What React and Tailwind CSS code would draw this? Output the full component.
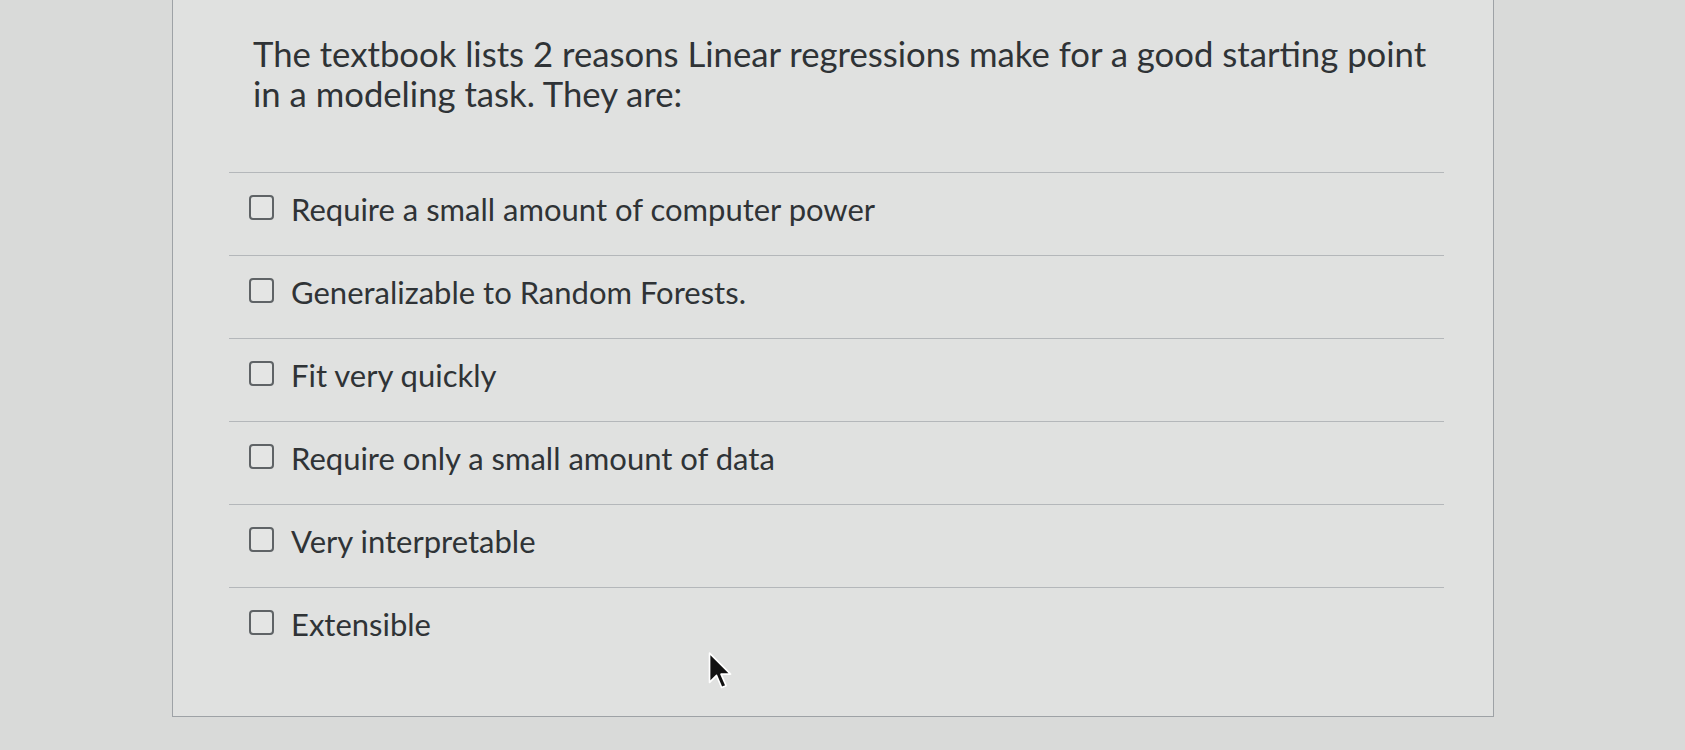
import React from "react";

const options = [
  "Require a small amount of computer power",
  "Generalizable to Random Forests.",
  "Fit very quickly",
  "Require only a small amount of data",
  "Very interpretable",
  "Extensible",
];

function Cursor() {
  return (
    <svg width="28" height="42" viewBox="0 0 22 32" className="absolute left-[707px] top-[650px]">
      <path d="M2 2 L2 25 L7.5 19.5 L11.5 29 L15 27.5 L11 18.5 L18.5 18.5 Z" fill="#111" stroke="#fff" strokeWidth="1.3" strokeLinejoin="round" />
    </svg>
  );
}

export default function App() {
  return (
    <div className="relative w-[1685px] h-[750px] overflow-hidden bg-[#d9dad9] font-['Lato','Liberation_Sans',sans-serif] text-[#2f3336]">
      <div className="ml-[172px] w-[1322px] h-[717px] bg-[#e0e1e0] border-x border-b border-[#9ea2a6] pl-[56px] pr-[49px]">
        <div className="pl-[24px] pt-[34px] text-[34.7px] leading-[40px] h-[172px]">
          The textbook lists 2 reasons Linear regressions make for a good starting point in a modeling task. They are:
        </div>
        {options.map((o, i) => (
          <div key={i} className="flex items-start gap-[17px] pl-[20px] pt-[22px] h-[83px] border-t border-[#b4b7ba]">
            <div className="w-[25px] h-[25px] shrink-0 rounded-[4px] border-[2px] border-[#5f6366] bg-[#e4e5e4]" />
            <div className="text-[31px] leading-[25px] pt-[2px]">{o}</div>
          </div>
        ))}
      </div>
      <Cursor />
    </div>
  );
}
